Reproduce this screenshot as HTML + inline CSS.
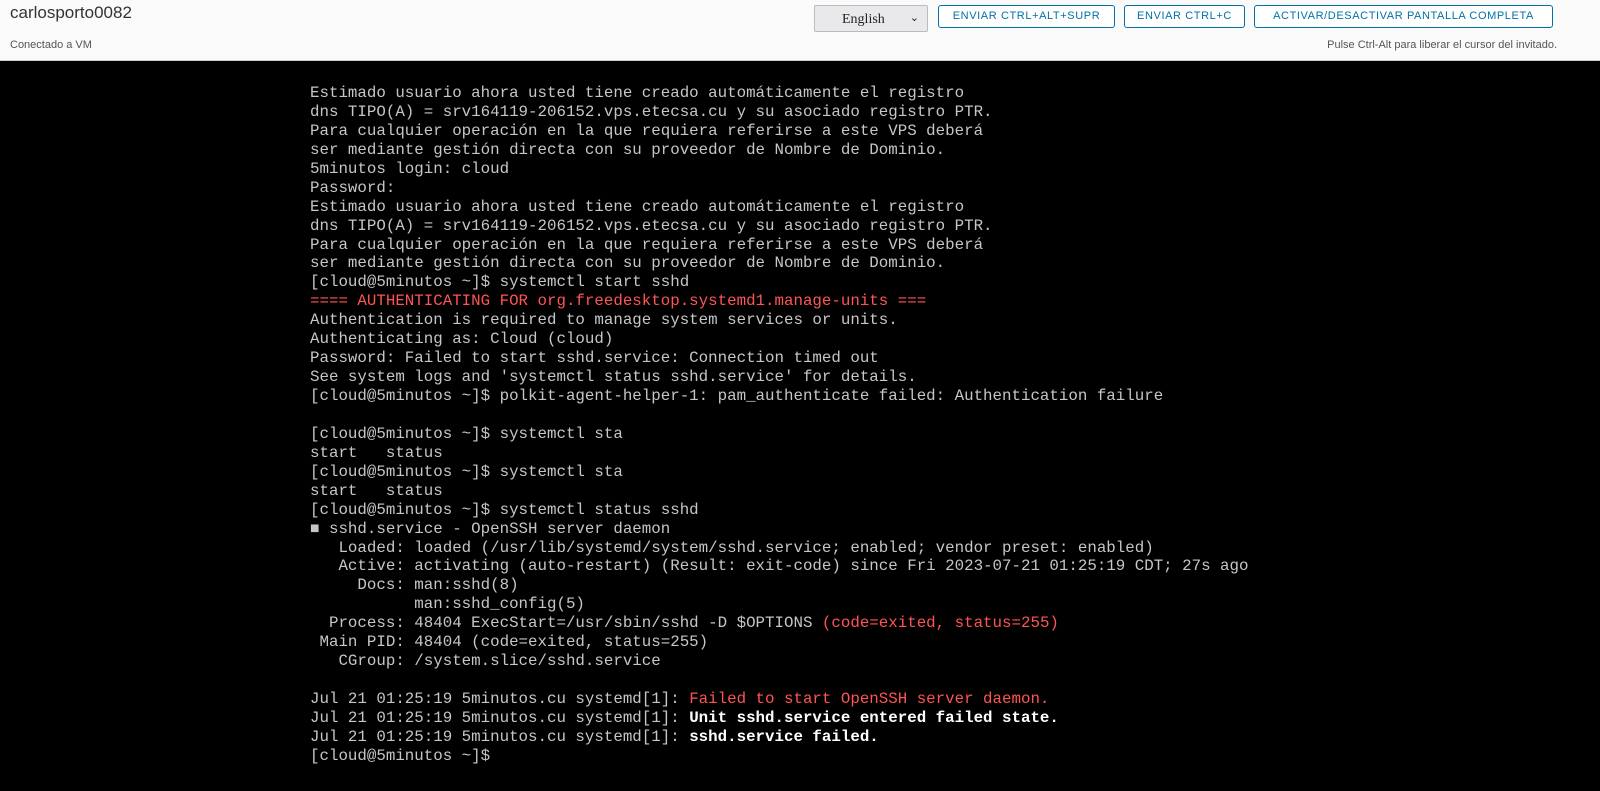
<!DOCTYPE html>
<html><head><meta charset="utf-8"><style>
body{margin:0;width:1600px;height:791px;overflow:hidden;background:#000;font-family:"Liberation Sans",sans-serif}
#hdr{position:absolute;left:0;top:0;width:1600px;height:60px;background:#fafafa;border-bottom:1px solid #ccc}
.t{position:absolute;left:10px;top:3px;font-size:17px;color:#333}
.s{position:absolute;left:10px;top:39px;font-size:11px;color:#555}
.r{position:absolute;right:43px;top:39px;font-size:11px;color:#555}
.sel{position:absolute;left:814px;top:5px;width:114px;height:27px;border:1px solid #bbb;border-radius:2px;background:#e9e9ec;font-family:"Liberation Serif",serif;font-size:14px;color:#222;box-sizing:border-box;padding:6px 0 0 27px}
.sel span{position:absolute;right:8px;top:5px;font-size:11px;font-family:"Liberation Sans"}
.b{position:absolute;top:5px;height:23px;border:1px solid #0072a3;border-radius:3px;color:#0072a3;font-size:11px;letter-spacing:.6px;white-space:nowrap;overflow:hidden;box-sizing:border-box;text-align:center;line-height:21px;background:#fff}
pre{position:absolute;left:310px;top:84px;margin:0;font-family:"Liberation Mono",monospace;font-size:15.8px;line-height:18.94px;color:#c6c6c6}
.red{color:#ff5454}.w{color:#fff;font-weight:bold}
</style></head><body>
<div id="hdr">
<div class="t">carlosporto0082</div>
<div class="s">Conectado a VM</div>
<div class="r">Pulse Ctrl-Alt para liberar el cursor del invitado.</div>
<div class="sel">English<span>⌄</span></div>
<div class="b" style="left:938px;width:177px">ENVIAR CTRL+ALT+SUPR</div>
<div class="b" style="left:1124px;width:121px">ENVIAR CTRL+C</div>
<div class="b" style="left:1254px;width:299px">ACTIVAR/DESACTIVAR PANTALLA COMPLETA</div>
</div>
<pre>Estimado usuario ahora usted tiene creado automáticamente el registro
dns TIPO(A) = srv164119-206152.vps.etecsa.cu y su asociado registro PTR.
Para cualquier operación en la que requiera referirse a este VPS deberá
ser mediante gestión directa con su proveedor de Nombre de Dominio.
5minutos login: cloud
Password:
Estimado usuario ahora usted tiene creado automáticamente el registro
dns TIPO(A) = srv164119-206152.vps.etecsa.cu y su asociado registro PTR.
Para cualquier operación en la que requiera referirse a este VPS deberá
ser mediante gestión directa con su proveedor de Nombre de Dominio.
[cloud@5minutos ~]$ systemctl start sshd
<span class="red">==== AUTHENTICATING FOR org.freedesktop.systemd1.manage-units ===</span>
Authentication is required to manage system services or units.
Authenticating as: Cloud (cloud)
Password: Failed to start sshd.service: Connection timed out
See system logs and 'systemctl status sshd.service' for details.
[cloud@5minutos ~]$ polkit-agent-helper-1: pam_authenticate failed: Authentication failure

[cloud@5minutos ~]$ systemctl sta
start   status
[cloud@5minutos ~]$ systemctl sta
start   status
[cloud@5minutos ~]$ systemctl status sshd
■ sshd.service - OpenSSH server daemon
   Loaded: loaded (/usr/lib/systemd/system/sshd.service; enabled; vendor preset: enabled)
   Active: activating (auto-restart) (Result: exit-code) since Fri 2023-07-21 01:25:19 CDT; 27s ago
     Docs: man:sshd(8)
           man:sshd_config(5)
  Process: 48404 ExecStart=/usr/sbin/sshd -D $OPTIONS <span class="red">(code=exited, status=255)</span>
 Main PID: 48404 (code=exited, status=255)
   CGroup: /system.slice/sshd.service

Jul 21 01:25:19 5minutos.cu systemd[1]: <span class="red">Failed to start OpenSSH server daemon.</span>
Jul 21 01:25:19 5minutos.cu systemd[1]: <span class="w">Unit sshd.service entered failed state.</span>
Jul 21 01:25:19 5minutos.cu systemd[1]: <span class="w">sshd.service failed.</span>
[cloud@5minutos ~]$</pre>
</body></html>
